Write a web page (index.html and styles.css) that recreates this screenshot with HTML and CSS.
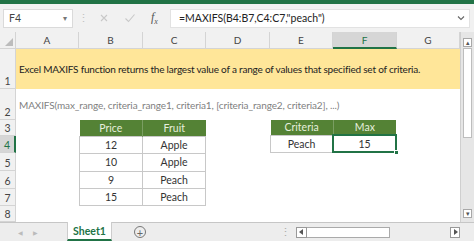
FILE: index.html
```html
<!DOCTYPE html>
<html lang="en">
<head>
    <meta charset="UTF-8">
    <meta name="viewport" content="width=device-width, initial-scale=1.0">
    <title>MAXIFS</title>
    <link rel="stylesheet" href="styles.css">
</head>
<body>

<!-- Ribbon edge -->
<div class="ribbon-edge"></div>

<!-- Formula bar -->
<div class="formula-bar">
    <div class="name-box">
        <span>F4</span>
        <span class="caret">&#9662;</span>
    </div>
    <div class="grip">&#8942;</div>
    <div class="fx-buttons">
        <svg class="fx-icon" width="10" height="10" viewBox="0 0 10 10"><path d="M2 2 L8 8 M8 2 L2 8" stroke="#c8c8c8" stroke-width="1.1" fill="none"/></svg>
        <svg class="fx-icon" width="12" height="10" viewBox="0 0 12 10"><path d="M1.5 5.5 L4.5 8.5 L10.5 1.5" stroke="#c8c8c8" stroke-width="1.1" fill="none"/></svg>
        <span class="fx-label">f<sub>x</sub></span>
    </div>
    <div class="formula-input">
        <span>=MAXIFS(B4:B7,C4:C7,"peach")</span>
        <svg width="8" height="6" viewBox="0 0 8 6"><path d="M1 1.5 L4 4.5 L7 1.5" stroke="#666" stroke-width="1.1" fill="none"/></svg>
    </div>
</div>

<!-- Sheet -->
<div class="sheet-wrap">
    <div class="sheet">
        <div class="corner"><span class="corner-tri"></span></div>
        <div class="col-head">A</div>
        <div class="col-head">B</div>
        <div class="col-head">C</div>
        <div class="col-head">D</div>
        <div class="col-head">E</div>
        <div class="col-head active">F</div>
        <div class="col-head">G</div>

        <div class="row-head r1">1</div>
        <div class="row-head r2">2</div>
        <div class="row-head r3">3</div>
        <div class="row-head r4 active">4</div>
        <div class="row-head r5">5</div>
        <div class="row-head r6">6</div>
        <div class="row-head r7">7</div>
        <div class="row-head r8">8</div>

        <div class="title-cell">Excel MAXIFS function returns the largest value of a range of values that specified set of criteria.</div>
        <div class="syntax-cell">MAXIFS(max_range, criteria_range1, criteria1, [criteria_range2, criteria2], ...)</div>

        <table class="data-table source">
            <tr><th>Price</th><th>Fruit</th></tr>
            <tr><td>12</td><td>Apple</td></tr>
            <tr><td>10</td><td>Apple</td></tr>
            <tr><td>9</td><td>Peach</td></tr>
            <tr><td>15</td><td>Peach</td></tr>
        </table>

        <table class="data-table result">
            <tr><th>Criteria</th><th>Max</th></tr>
            <tr><td>Peach</td><td class="selected">15<span class="fill-handle"></span></td></tr>
        </table>
    </div>

    <div class="v-scroll">
        <div class="arrow-box">&#9652;</div>
        <div class="v-thumb"></div>
        <div class="v-track"></div>
        <div class="arrow-box">&#9662;</div>
    </div>
</div>

<!-- Sheet tabs -->
<div class="tab-bar">
    <div class="tab-nav">
        <span>&#9664;</span>
        <span>&#9654;</span>
    </div>
    <div class="sheet-tab">Sheet1</div>
    <div class="add-cell"><span class="add-sheet">+</span></div>
    <div class="tab-space"></div>
    <div class="tab-grip">&#8942;</div>
    <div class="tab-space"></div>
    <div class="h-arrow">
        <svg width="5" height="6" viewBox="0 0 5 6"><path d="M4 0 L0 3 L4 6 Z" fill="#555"/></svg>
    </div>
    <div class="h-thumb"></div>
    <div class="tab-space"></div>
    <div class="h-arrow">
        <svg width="5" height="6" viewBox="0 0 5 6"><path d="M1 0 L5 3 L1 6 Z" fill="#555"/></svg>
    </div>
    <div class="tab-space"></div>
</div>

</body>
</html>
```

FILE: styles.css
```css
* {
    margin: 0;
    padding: 0;
    box-sizing: border-box;
}

body {
    width: 474px;
    height: 241px;
    overflow: hidden;
    background-color: #fff;
    font-family: 'Lato', 'Open Sans', sans-serif;
    color: #333;
}

.ribbon-edge {
    height: 4px;
    background-color: #217346;
}

/* Formula bar */
.formula-bar {
    height: 28px;
    display: flex;
    align-items: center;
    padding: 0 4px 0 3px;
    background-color: #f1f1f1;
}

.name-box {
    width: 70px;
    height: 19px;
    display: flex;
    justify-content: space-between;
    align-items: center;
    padding: 0 5px;
    background-color: #fff;
    border: 1px solid #dadada;
    font-size: 10.5px;
    color: #444;
}

.name-box .caret {
    font-size: 8px;
    color: #777;
}

.grip {
    width: 20px;
    text-align: center;
    font-size: 11px;
    color: #c0c0c0;
}

.fx-buttons {
    width: 77px;
    display: flex;
    align-items: center;
    gap: 15px;
    padding-left: 6px;
}

.fx-label {
    font-family: 'Liberation Serif', serif;
    font-style: italic;
    font-size: 12px;
    color: #555;
}

.fx-label sub {
    font-size: 8px;
}

.formula-input {
    flex: 1;
    height: 19px;
    display: flex;
    justify-content: space-between;
    align-items: center;
    padding: 0 4px 0 8px;
    background-color: #fff;
    border: 1px solid #e2e2e2;
    font-size: 10.5px;
    color: #222;
}

/* Grid */
.sheet-wrap {
    display: flex;
    height: 190px;
}

.sheet {
    width: 460px;
    display: grid;
    grid-template-columns: 16px 63px 64px 63px 64px 63px 64px 63px;
    grid-template-rows: 17px 40px 31px 16px 17px 18px 18px 17px 16px;
    overflow: hidden;
}

.corner {
    position: relative;
    background-color: #f1f1f1;
    border-right: 1px solid #d4d4d4;
    border-bottom: 1px solid #d4d4d4;
}

.corner-tri {
    position: absolute;
    right: 2px;
    bottom: 2px;
    width: 0;
    height: 0;
    border-left: 8px solid transparent;
    border-bottom: 8px solid #bcbcbc;
}

.col-head {
    display: flex;
    justify-content: center;
    align-items: center;
    background-color: #f1f1f1;
    border-right: 1px solid #d4d4d4;
    border-bottom: 1px solid #d4d4d4;
    font-size: 10px;
    color: #444;
}

.col-head.active {
    background-color: #d6d6d6;
    border-bottom: 2px solid #217346;
    color: #217346;
}

.row-head {
    grid-column: 1;
    display: flex;
    justify-content: center;
    align-items: flex-end;
    padding-bottom: 1px;
    background-color: #f1f1f1;
    border-right: 1px solid #d4d4d4;
    border-bottom: 1px solid #d4d4d4;
    font-size: 10.5px;
    color: #444;
}

.row-head.active {
    background-color: #d6d6d6;
    border-right: 2px solid #217346;
    color: #217346;
}

.r1 { grid-row: 2; }
.r2 { grid-row: 3; }
.r3 { grid-row: 4; }
.r4 { grid-row: 5; }
.r5 { grid-row: 6; }
.r6 { grid-row: 7; }
.r7 { grid-row: 8; }
.r8 { grid-row: 9; }

.title-cell {
    grid-column: 2 / 9;
    grid-row: 2;
    display: flex;
    align-items: center;
    padding-left: 3px;
    background-color: #ffe699;
    font-size: 10px;
    letter-spacing: -0.2px;
    white-space: nowrap;
    color: #222;
}

.syntax-cell {
    grid-column: 2 / 9;
    grid-row: 3;
    display: flex;
    align-items: center;
    padding-left: 3px;
    font-size: 10px;
    letter-spacing: -0.12px;
    white-space: nowrap;
    color: #7f7f7f;
}

/* Tables */
.data-table {
    border-collapse: collapse;
    width: 100%;
    height: 100%;
    table-layout: fixed;
    font-size: 10.5px;
}

.data-table.source {
    grid-column: 3 / 5;
    grid-row: 4 / 9;
}

.data-table.result {
    grid-column: 6 / 8;
    grid-row: 4 / 6;
}

.data-table th {
    background-color: #548235;
    color: #e6efdd;
    font-weight: normal;
    border-right: 1px solid #7a9e62;
}

.data-table th:last-child {
    border-right: none;
}

.data-table td {
    text-align: center;
    color: #333;
    border: 1px solid #c8c8c8;
}

.data-table td.selected {
    position: relative;
    border: 2px solid #217346;
}

.fill-handle {
    position: absolute;
    right: -4px;
    bottom: -4px;
    width: 5px;
    height: 5px;
    background-color: #217346;
    border: 1px solid #fff;
}

/* Scrollbars */
.v-scroll {
    width: 14px;
    display: flex;
    flex-direction: column;
    padding: 6px 2px 4px 2px;
    background-color: #e6e6e6;
    border-left: 1px solid #cfcfcf;
}

.arrow-box {
    height: 9px;
    display: flex;
    justify-content: center;
    align-items: center;
    background-color: #fff;
    border: 1px solid #a8a8a8;
    font-size: 7px;
    color: #555;
}

.v-thumb {
    height: 90px;
    margin-top: 1px;
    background-color: #fff;
    border: 1px solid #bdbdbd;
}

.v-track {
    flex: 1;
}

/* Sheet tab bar */
.tab-bar {
    height: 19px;
    display: grid;
    grid-template-columns: 67px 45px 34px 134px 14px 2px 11px 83px 1fr 10px 14px;
    align-items: center;
    background-color: #ededed;
    border-top: 1px solid #c6c6c6;
}

.tab-nav {
    display: flex;
    align-items: center;
    gap: 10px;
    padding-left: 18px;
    font-size: 6px;
    color: #bbb;
}

.sheet-tab {
    height: 19px;
    margin-top: -1px;
    display: flex;
    justify-content: center;
    align-items: center;
    background-color: #fff;
    border-left: 1px solid #ccc;
    border-right: 1px solid #ccc;
    border-bottom: 2px solid #217346;
    font-size: 10.5px;
    font-weight: bold;
    color: #217346;
}

.add-cell {
    display: flex;
    justify-content: flex-end;
}

.add-sheet {
    width: 12px;
    height: 12px;
    display: flex;
    justify-content: center;
    align-items: center;
    border: 1px solid #777;
    border-radius: 50%;
    font-size: 11px;
    line-height: 1;
    color: #666;
}

.tab-grip {
    font-size: 11px;
    color: #aaa;
}

.h-arrow {
    height: 11px;
    display: flex;
    justify-content: center;
    align-items: center;
    background-color: #fff;
    border: 1px solid #999;
}

.h-thumb {
    height: 11px;
    background-color: #fff;
    border: 1px solid #aaa;
    border-left: none;
}
```
